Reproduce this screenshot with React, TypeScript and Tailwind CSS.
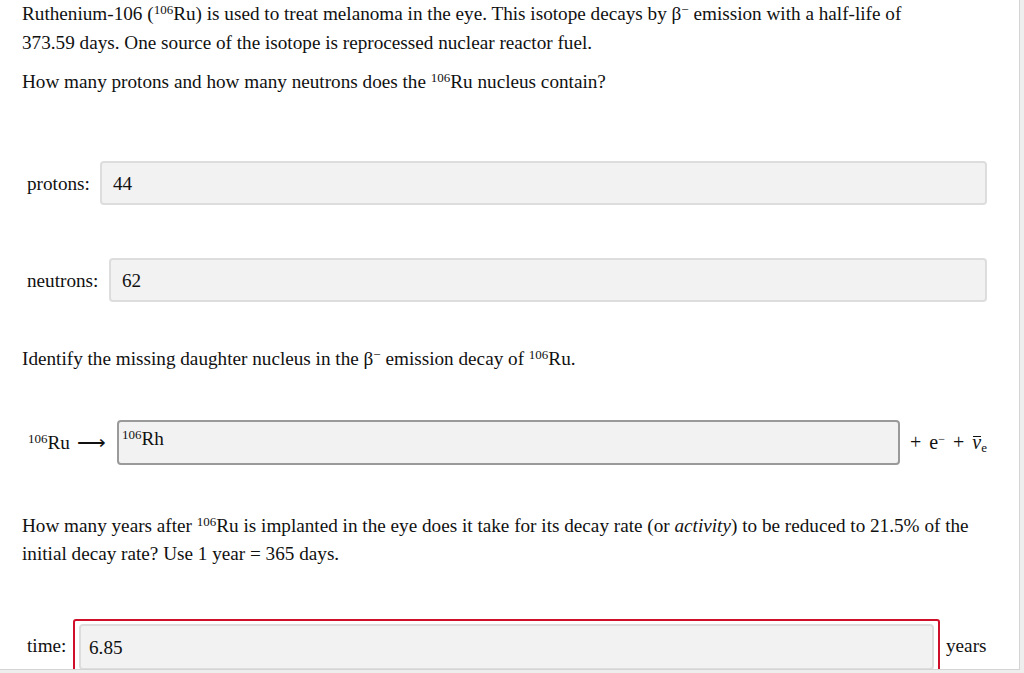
import React from 'react';

function Iso({ mass, sym }: { mass: string; sym: string }) {
  return (
    <span>
      <sup className="text-[13px]">{mass}</sup>
      {sym}
    </span>
  );
}

function Field({ label, value, labelWidth }: { label: string; value: string; labelWidth: string }) {
  return (
    <div className="flex items-center pl-[5px]">
      <span className={`${labelWidth} shrink-0`}>{label}</span>
      <div className="flex h-[44px] flex-1 items-center rounded-[4px] border-2 border-[#dddddd] bg-[#f2f2f2] pl-[11px]">
        {value}
      </div>
    </div>
  );
}

export default function App() {
  return (
    <div className="h-screen w-full overflow-hidden bg-[#eeeeee]">
      <div
        className="h-[670px] w-[1020px] overflow-hidden border-r border-b border-[#d4d4d4] bg-white pr-[32px] pl-[22px] text-[19.2px] text-[#111] leading-[29px]"
        style={{ fontFamily: '"Liberation Serif", "Times New Roman", serif' }}
      >
        <p className="-mt-px">
          Ruthenium-106 (<Iso mass="106" sym="Ru" />) is used to treat melanoma in the eye. This isotope decays by β<sup className="text-[13px]">−</sup> emission with a half-life of
          <br />
          373.59 days. One source of the isotope is reprocessed nuclear reactor fuel.
        </p>
        <p className="mt-[10px]">
          How many protons and how many neutrons does the <Iso mass="106" sym="Ru" /> nucleus contain?
        </p>

        <div className="mt-[65px]">
          <Field label="protons:" value="44" labelWidth="w-[73px]" />
        </div>
        <div className="mt-[53px]">
          <Field label="neutrons:" value="62" labelWidth="w-[82px]" />
        </div>

        <p className="mt-[42px]">
          Identify the missing daughter nucleus in the β<sup className="text-[13px]">−</sup> emission decay of <Iso mass="106" sym="Ru" />.
        </p>

        <div className="mt-[47px] flex items-center pl-[6px]">
          <span className="flex w-[89px] shrink-0 items-center whitespace-nowrap">
            <Iso mass="106" sym="Ru" />
            <span className="ml-[7px] text-[20px]">⟶</span>
          </span>
          <div className="flex h-[45px] flex-1 items-start rounded-[4px] border-2 border-[#9a9a9a] bg-[#f2f2f2] pl-[3px] pt-[2px]">
            <Iso mass="106" sym="Rh" />
          </div>
          <span className="ml-[10px] flex w-[77px] shrink-0 items-center justify-between whitespace-nowrap text-[20px]">
            <span>+</span>
            <span>
              e<sup className="text-[12px]">−</sup>
            </span>
            <span>+</span>
            <span>
              <span className="relative">
                <i>ν</i>
                <span className="absolute left-[1px] top-[5px] h-px w-[8px] bg-[#111]" />
              </span>
              <sub className="text-[13px]">e</sub>
            </span>
          </span>
        </div>

        <p className="mt-[47px] leading-[28px]">
          How many years after <Iso mass="106" sym="Ru" /> is implanted in the eye does it take for its decay rate (or <i>activity</i>) to be reduced to 21.5% of the
          initial decay rate? Use 1 year = 365 days.
        </p>

        <div className="mt-[51px] flex items-start pl-[5px]">
          <span className="mt-[12px] w-[46px] shrink-0">time:</span>
          <div className="h-[70px] flex-1 rounded-t-[3px] border-2 border-[#d0102a] px-[4px] pt-[3px]">
            <div className="flex h-[46px] items-center rounded-[4px] border-2 border-[#dddddd] bg-[#f2f2f2] pl-[8px]">
              6.85
            </div>
          </div>
          <span className="mt-[12px] ml-[6px] w-[41px] shrink-0">years</span>
        </div>
      </div>
    </div>
  );
}
